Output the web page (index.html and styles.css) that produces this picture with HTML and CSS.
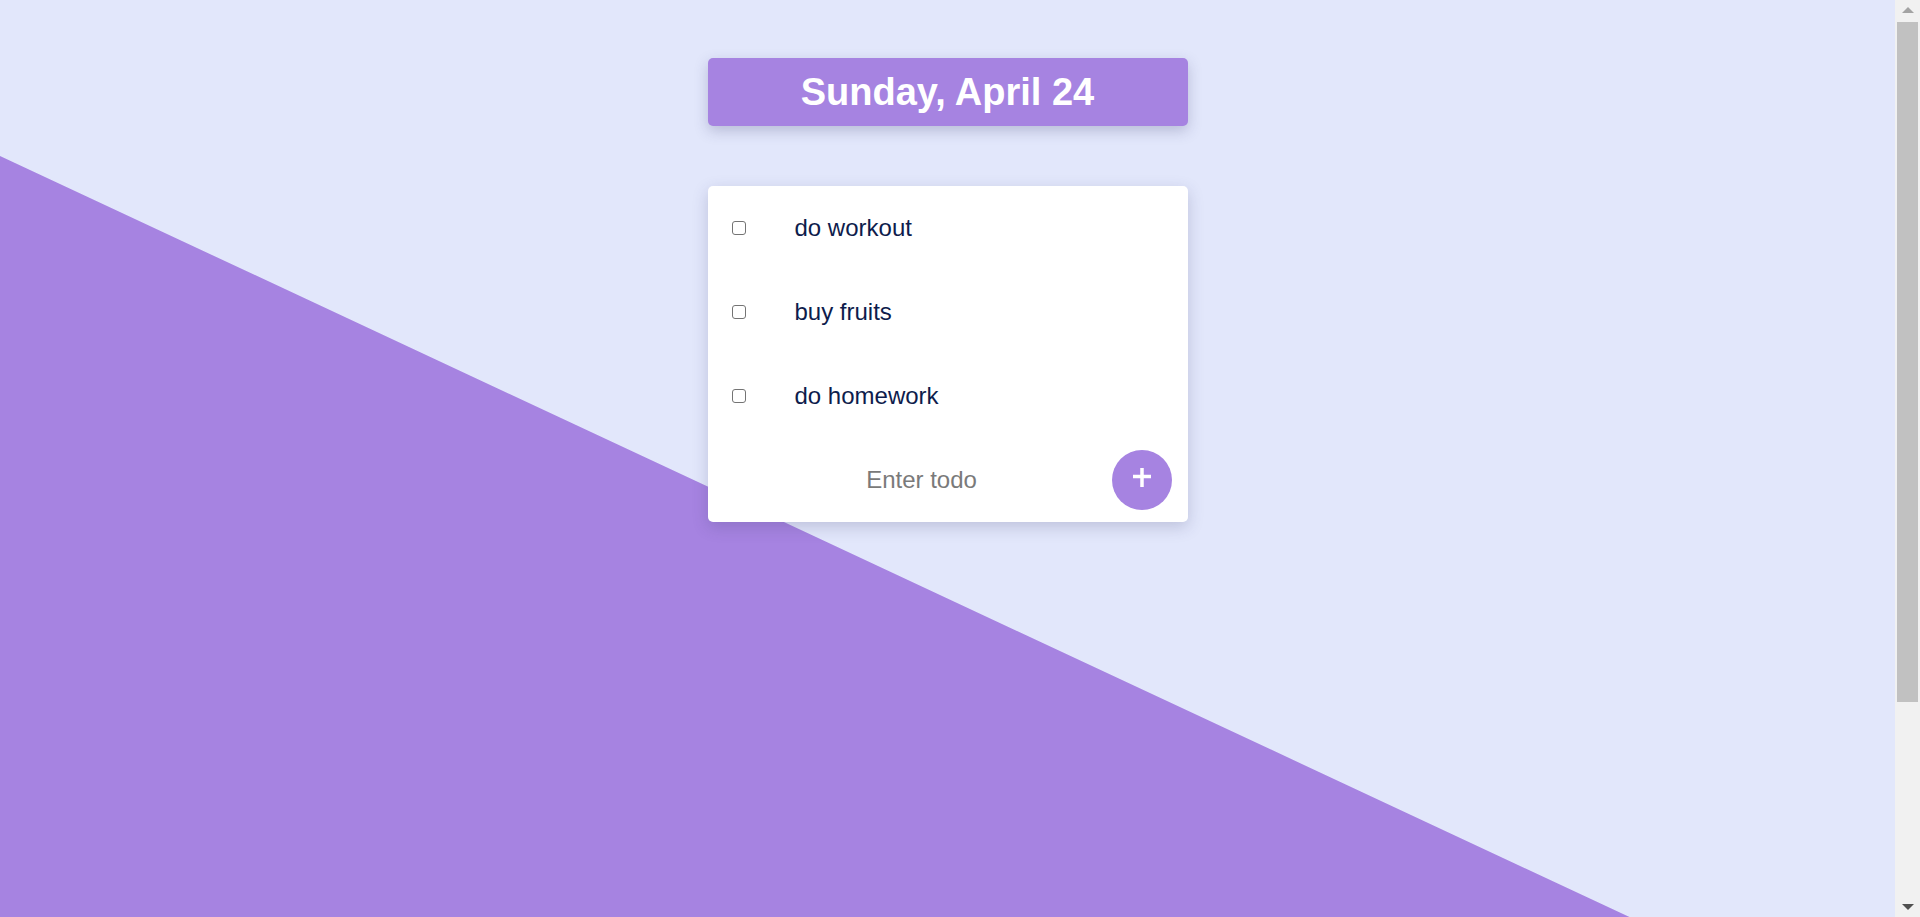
FILE: index.html
```html
<!DOCTYPE html>
<html lang="en">
<head>
<meta charset="utf-8">
<title>Todo</title>
<link rel="stylesheet" href="styles.css">
</head>
<body>
<div class="window">
  <div class="page">
    <main class="app">
      <h1 class="date">Sunday, April 24</h1>
      <section class="card">
        <label class="todo"><input type="checkbox" class="check"><span class="label">do workout</span></label>
        <label class="todo"><input type="checkbox" class="check"><span class="label">buy fruits</span></label>
        <label class="todo"><input type="checkbox" class="check"><span class="label">do homework</span></label>
        <form class="add">
          <input type="text" class="entry" placeholder="Enter todo">
          <button type="button" class="plus" aria-label="Add">
            <svg width="18" height="19" viewBox="0 0 18 19"><path d="M9 0v19M0 8.5h18" stroke="#fff" stroke-width="3.5" fill="none"/></svg>
          </button>
        </form>
      </section>
    </main>
  </div>
  <div class="scrollbar" aria-hidden="true">
    <div class="sb-btn">
      <svg width="12" height="6" viewBox="0 0 12 6"><path d="M6 0L12 6H0Z" fill="#a3a3a3"/></svg>
    </div>
    <div class="sb-track">
      <div class="sb-thumb"></div>
    </div>
    <div class="sb-btn">
      <svg width="12" height="6" viewBox="0 0 12 6"><path d="M0 0H12L6 6Z" fill="#505050"/></svg>
    </div>
  </div>
</div>
</body>
</html>
```
FILE: styles.css
```css
html, body {
  margin: 0;
  padding: 0;
  height: 100%;
  overflow: hidden;
}
body {
  font-family: "Liberation Sans", Arial, sans-serif;
  color: #0e1c4c;
  background: #e2e7fb;
}
.window {
  display: flex;
  height: 917px;
}
.page {
  position: relative;
  flex: 1;
  min-width: 0;
  overflow: hidden;
  padding-top: 58px;
  box-sizing: border-box;
  background: #e2e7fb;
}
.page::before {
  content: "";
  position: absolute;
  inset: 0;
  background: #a683e1;
  clip-path: polygon(0 156px, 100% 1041px, 100% 100%, 0 100%);
  z-index: 0;
}
.app {
  position: relative;
  z-index: 1;
  width: 480px;
  margin: 0 auto;
  display: flex;
  flex-direction: column;
  gap: 60px;
}
.date {
  margin: 0;
  height: 68px;
  display: flex;
  align-items: center;
  justify-content: center;
  background: #a683e1;
  color: #fff;
  font-size: 38px;
  font-weight: 700;
  border-radius: 5px;
  box-shadow: 0 5px 14px rgba(60, 60, 110, 0.25);
}
.card {
  background: #fff;
  border-radius: 5px;
  box-shadow: 0 5px 16px rgba(60, 60, 110, 0.22);
  display: flex;
  flex-direction: column;
}
.todo {
  height: 84px;
  display: flex;
  align-items: center;
  padding-left: 24px;
}
.check {
  appearance: none;
  -webkit-appearance: none;
  margin: 0 49px 0 0;
  width: 14px;
  height: 14px;
  border: 1px solid #747474;
  border-radius: 3px;
  background: #fff;
  box-sizing: border-box;
  flex: none;
}
.label {
  font-size: 24px;
}
.add {
  height: 84px;
  display: flex;
  align-items: center;
  padding: 0 16px 0 24px;
  margin: 0;
}
.entry {
  flex: 1;
  min-width: 0;
  border: none;
  outline: none;
  background: transparent;
  font-family: "Liberation Sans", Arial, sans-serif;
  font-size: 24px;
  text-align: center;
  color: #0e1c4c;
  padding: 0;
}
.entry::placeholder {
  color: #7a7a7a;
}
.plus {
  width: 60px;
  height: 60px;
  border-radius: 50%;
  border: none;
  background: #a683e1;
  display: flex;
  align-items: center;
  justify-content: center;
  padding: 0 0 5px 0;
  flex: none;
}
.scrollbar {
  width: 25px;
  flex: none;
  background: #f1f1f1;
  display: flex;
  flex-direction: column;
}
.sb-btn {
  height: 20px;
  display: flex;
  align-items: center;
  justify-content: center;
  flex: none;
}
.sb-track {
  flex: 1;
  padding: 2px 2px 0;
}
.sb-thumb {
  height: 680px;
  background: #c1c1c1;
}
```
